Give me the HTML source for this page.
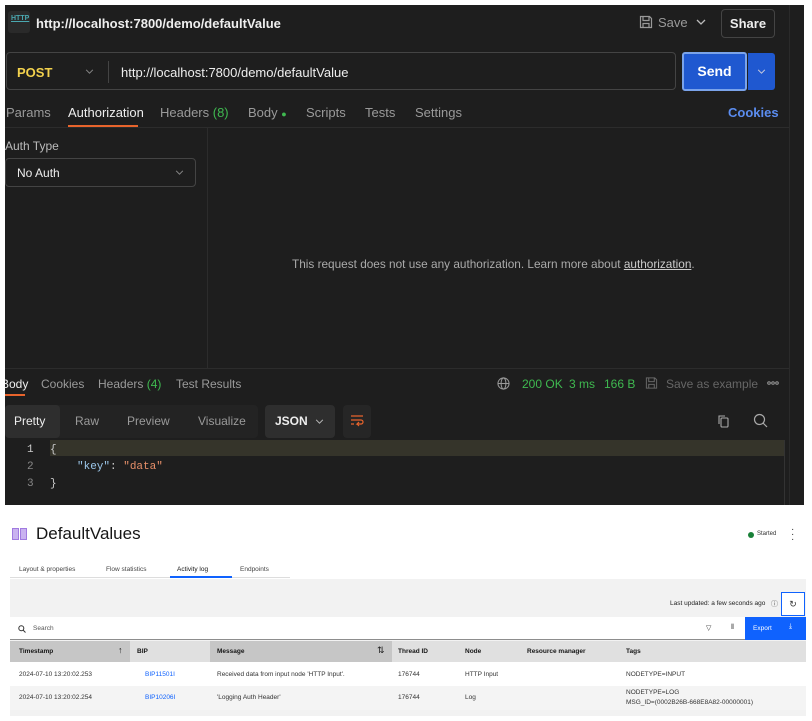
<!DOCTYPE html>
<html><head><meta charset="utf-8"><style>
*{margin:0;padding:0;box-sizing:border-box}
body{width:812px;height:721px;background:#fff;font-family:"Liberation Sans",sans-serif;position:relative;overflow:hidden}
.a{position:absolute;white-space:nowrap}
#dk{position:absolute;left:5px;top:5px;width:799px;height:500px;background:#1e1e1e;overflow:hidden}
.g{color:#9a9a9a}
.w{color:#eee}
</style></head><body>
<div id="dk">
 <div class="a" style="left:3px;top:6px;width:22px;height:22px;background:#2a2a2a;border-radius:3px"></div>
 <div class="a" style="left:6px;top:10px;font-size:7px;color:#4aa8b0;font-weight:bold;text-decoration:underline">HTTP</div>
 <div class="a w" style="left:31px;top:11px;font-size:13px;font-weight:bold">http://localhost:7800/demo/defaultValue</div>
 <svg class="a" style="left:634px;top:10px" width="14" height="14" viewBox="0 0 14 14" fill="none" stroke="#999" stroke-width="1.2"><path d="M1.5 1.5h9l2 2v9h-11z M4 1.5v4h6v-4 M4 12.5v-4h6v4"/></svg>
 <div class="a g" style="left:653px;top:10px;font-size:13px">Save</div>
 <svg class="a" style="left:691px;top:14px" width="10" height="6" viewBox="0 0 10 6" fill="none" stroke="#bbb" stroke-width="1.3"><path d="M1 1l4 4 4-4"/></svg>
 <div class="a" style="left:716px;top:4px;width:54px;height:29px;border:1px solid #444;border-radius:4px;color:#eee;font-size:13px;font-weight:bold;text-align:center;line-height:27px">Share</div>
 <div class="a" style="left:784px;top:0;width:1px;height:500px;background:#2a2a2a"></div>

 <div class="a" style="left:1px;top:47px;width:670px;height:38px;border:1px solid #444;border-radius:4px"></div>
 <div class="a" style="left:12px;top:60px;font-size:13px;font-weight:bold;color:#f2d14d">POST</div>
 <svg class="a" style="left:80px;top:64px" width="9" height="5" viewBox="0 0 10 6" fill="none" stroke="#888" stroke-width="1.2"><path d="M1 1l4 4 4-4"/></svg>
 <div class="a" style="left:103px;top:56px;width:1px;height:22px;background:#444"></div>
 <div class="a w" style="left:116px;top:60px;font-size:13px">http://localhost:7800/demo/defaultValue</div>
 <div class="a" style="left:677px;top:47px;width:65px;height:39px;background:#1f58d0;border:2px solid #7aa3ea;border-radius:3px;color:#fff;font-size:14px;font-weight:bold;text-align:center;line-height:35px">Send</div>
 <div class="a" style="left:743px;top:48px;width:27px;height:37px;background:#1f58d0;border-radius:0 3px 3px 0"></div>
 <svg class="a" style="left:752px;top:64px" width="9" height="5" viewBox="0 0 10 6" fill="none" stroke="#ccd" stroke-width="1.2"><path d="M1 1l4 4 4-4"/></svg>

 <div class="a g" style="left:1px;top:100px;font-size:13px">Params</div>
 <div class="a w" style="left:63px;top:100px;font-size:13px">Authorization</div>
 <div class="a" style="left:63px;top:120px;width:70px;height:2px;background:#e8642c"></div>
 <div class="a g" style="left:155px;top:100px;font-size:13px">Headers <span style="color:#3fb950">(8)</span></div>
 <div class="a g" style="left:243px;top:100px;font-size:13px">Body <span style="color:#3fb950;font-size:9px">●</span></div>
 <div class="a g" style="left:301px;top:100px;font-size:13px">Scripts</div>
 <div class="a g" style="left:360px;top:100px;font-size:13px">Tests</div>
 <div class="a g" style="left:410px;top:100px;font-size:13px">Settings</div>
 <div class="a" style="left:723px;top:100px;font-size:13px;font-weight:bold;color:#5b8df0">Cookies</div>
 <div class="a" style="left:0;top:122px;width:784px;height:1px;background:#2c2c2c"></div>
 <div class="a" style="left:202px;top:123px;width:1px;height:240px;background:#2c2c2c"></div>
 <div class="a" style="left:0;top:134px;font-size:12px;color:#bbb">Auth Type</div>
 <div class="a" style="left:0;top:153px;width:191px;height:29px;border:1px solid #444;border-radius:4px"></div>
 <div class="a w" style="left:12px;top:161px;font-size:12px">No Auth</div>
 <svg class="a" style="left:170px;top:165px" width="9" height="5" viewBox="0 0 10 6" fill="none" stroke="#888" stroke-width="1.2"><path d="M1 1l4 4 4-4"/></svg>
 <div class="a" style="left:287px;top:252px;font-size:11.8px;color:#aaa">This request does not use any authorization. Learn more about <span style="text-decoration:underline;color:#ccc">authorization</span>.</div>

 <div class="a" style="left:0;top:363px;width:784px;height:1px;background:#2c2c2c"></div>
 <div class="a w" style="left:-4px;top:372px;font-size:12px">Body</div>
 <div class="a" style="left:0;top:389px;width:20px;height:2px;background:#e8642c"></div>
 <div class="a g" style="left:36px;top:372px;font-size:12px">Cookies</div>
 <div class="a g" style="left:93px;top:372px;font-size:12px">Headers <span style="color:#3fb950">(4)</span></div>
 <div class="a g" style="left:171px;top:372px;font-size:12px">Test Results</div>
 <svg class="a" style="left:492px;top:372px" width="13" height="13" viewBox="0 0 14 14" fill="none" stroke="#999" stroke-width="1.1"><circle cx="7" cy="7" r="6"/><ellipse cx="7" cy="7" rx="2.6" ry="6"/><path d="M1 7h12"/></svg>
 <div class="a" style="left:517px;top:372px;font-size:12px;color:#3fb950">200 OK</div>
 <div class="a" style="left:564px;top:372px;font-size:12px;color:#3fb950">3 ms</div>
 <div class="a" style="left:599px;top:372px;font-size:12px;color:#3fb950">166 B</div>
 <svg class="a" style="left:640px;top:371px" width="13" height="14" viewBox="0 0 14 14" fill="none" stroke="#666" stroke-width="1.1"><path d="M1.5 1.5h9l2 2v9h-11z M4 1.5v4h6v-4 M4 12.5v-4h6v4"/></svg>
 <div class="a" style="left:661px;top:372px;font-size:12px;color:#666">Save as example</div>
 <svg class="a" style="left:762px;top:376px" width="12" height="4" viewBox="0 0 12 4" fill="none" stroke="#999"><circle cx="2" cy="2" r="1.3"/><circle cx="6" cy="2" r="1.3"/><circle cx="10" cy="2" r="1.3"/></svg>

 <div class="a" style="left:0;top:400px;width:253px;height:33px;background:#232323;border-radius:4px"></div>
 <div class="a" style="left:0;top:400px;width:55px;height:33px;background:#2e2e2e;border-radius:4px"></div>
 <div class="a w" style="left:9px;top:409px;font-size:12px">Pretty</div>
 <div class="a g" style="left:70px;top:409px;font-size:12px">Raw</div>
 <div class="a g" style="left:122px;top:409px;font-size:12px">Preview</div>
 <div class="a g" style="left:193px;top:409px;font-size:12px">Visualize</div>
 <div class="a" style="left:260px;top:400px;width:70px;height:33px;background:#2e2e2e;border-radius:4px"></div>
 <div class="a w" style="left:270px;top:409px;font-size:12px;font-weight:bold">JSON</div>
 <svg class="a" style="left:310px;top:414px" width="9" height="5" viewBox="0 0 10 6" fill="none" stroke="#bbb" stroke-width="1.2"><path d="M1 1l4 4 4-4"/></svg>
 <div class="a" style="left:338px;top:400px;width:28px;height:33px;background:#262626;border-radius:4px"></div>
 <svg class="a" style="left:345px;top:409px" width="14" height="14" viewBox="0 0 14 14" fill="none" stroke="#e8642c" stroke-width="1.2"><path d="M1 2h12M1 6h10a2 2 0 0 1 0 4H7l2-2M7 10l2 2M1 10h3"/></svg>
 <svg class="a" style="left:712px;top:409px" width="14" height="14" viewBox="0 0 14 14" fill="none" stroke="#aaa" stroke-width="1.1"><rect x="4" y="4" width="7" height="9" rx="1"/><path d="M2 10V2h6"/></svg>
 <svg class="a" style="left:748px;top:408px" width="15" height="15" viewBox="0 0 15 15" fill="none" stroke="#aaa" stroke-width="1.2"><circle cx="6.5" cy="6.5" r="5"/><path d="M10 10l4 4"/></svg>

 <div class="a" style="left:45px;top:435px;width:734px;height:16px;background:#35342a"></div>
 <div class="a" style="left:779px;top:435px;width:1px;height:65px;background:#333"></div>
 <div style="position:absolute;left:0;top:437px;font-family:'Liberation Mono',monospace;font-size:11px;line-height:16.5px">
  <div class="a" style="left:22px;top:0;color:#ccc">1</div><div class="a" style="left:45px;top:0;color:#ccc">{</div>
  <div class="a" style="left:22px;top:17px;color:#888">2</div><div class="a" style="left:72px;top:17px"><span style="color:#9cc7ea">"key"</span><span style="color:#ccc">: </span><span style="color:#e8906a">"data"</span></div>
  <div class="a" style="left:22px;top:34px;color:#888">3</div><div class="a" style="left:45px;top:34px;color:#ccc">}</div>
 </div>
</div>

<div class="a" style="left:12px;top:528px;width:7px;height:12px;background:#c9b2f0;border:1px solid #a07ae0"></div>
<div class="a" style="left:20px;top:528px;width:7px;height:12px;background:#c9b2f0;border:1px solid #a07ae0"></div>
<div class="a" style="left:36px;top:524px;font-size:17px;color:#161616">DefaultValues</div>
<div class="a" style="left:748px;top:532px;width:6px;height:6px;border-radius:50%;background:#198038"></div>
<div class="a" style="left:757px;top:531px;font-size:6px;color:#333">Started</div>
<div class="a" style="left:791px;top:527px;font-size:10px;color:#333;line-height:5px">·<br>·<br>·</div>
<div class="a" style="left:19px;top:566px;font-size:6.5px;color:#444">Layout &amp; properties</div>
<div class="a" style="left:106px;top:566px;font-size:6.5px;color:#444">Flow statistics</div>
<div class="a" style="left:177px;top:566px;font-size:6.5px;color:#161616">Activity log</div>
<div class="a" style="left:240px;top:566px;font-size:6.5px;color:#444">Endpoints</div>
<div class="a" style="left:10px;top:577px;width:280px;height:1px;background:#ddd"></div>
<div class="a" style="left:170px;top:576px;width:62px;height:2px;background:#0f62fe"></div>
<div class="a" style="left:10px;top:579px;width:796px;height:137px;background:#f2f2f2"></div>
<div class="a" style="left:670px;top:600px;font-size:6.5px;color:#222">Last updated: a few seconds ago</div>
<div class="a" style="left:771px;top:599px;font-size:7px;color:#555">ⓘ</div>
<div class="a" style="left:781px;top:592px;width:24px;height:24px;border:1px solid #0f62fe;background:#fff;font-size:9px;text-align:center;line-height:22px;color:#333">↻</div>
<div class="a" style="left:10px;top:617px;width:735px;height:23px;background:#fff;border-bottom:1px solid #8d8d8d"></div>
<svg class="a" style="left:18px;top:625px" width="8" height="8" viewBox="0 0 8 8" fill="none" stroke="#333"><circle cx="3.3" cy="3.3" r="2.5"/><path d="M5 5l2.5 2.5"/></svg>
<div class="a" style="left:33px;top:625px;font-size:6.5px;color:#555">Search</div>
<div class="a" style="left:706px;top:624px;font-size:7px;color:#333">▽</div>
<div class="a" style="left:731px;top:624px;font-size:7px;color:#333">⦀</div>
<div class="a" style="left:745px;top:617px;width:61px;height:23px;background:#0f62fe"></div>
<div class="a" style="left:753px;top:625px;font-size:6.5px;color:#fff">Export</div>
<div class="a" style="left:789px;top:623px;font-size:7px;color:#fff">⤓</div>
<div class="a" style="left:10px;top:641px;width:796px;height:21px;background:#e0e0e0"></div>
<div class="a" style="left:10px;top:641px;width:120px;height:21px;background:#c6c6c6"></div>
<div class="a" style="left:210px;top:641px;width:182px;height:21px;background:#c6c6c6"></div>
<div style="font-size:6.5px;font-weight:bold;color:#161616">
<div class="a" style="left:19px;top:648px">Timestamp</div><div class="a" style="left:118px;top:645px;font-size:9px;font-weight:normal">↑</div>
<div class="a" style="left:137px;top:648px">BIP</div>
<div class="a" style="left:217px;top:648px">Message</div><div class="a" style="left:377px;top:645px;font-size:9px;font-weight:normal">⇅</div>
<div class="a" style="left:398px;top:648px">Thread ID</div>
<div class="a" style="left:465px;top:648px">Node</div>
<div class="a" style="left:527px;top:648px">Resource manager</div>
<div class="a" style="left:626px;top:648px">Tags</div>
</div>
<div class="a" style="left:10px;top:662px;width:796px;height:24px;background:#fff"></div>
<div class="a" style="left:10px;top:686px;width:796px;height:24px;background:#f4f4f4"></div>
<div style="font-size:6.5px;color:#333">
<div class="a" style="left:19px;top:671px">2024-07-10 13:20:02.253</div>
<div class="a" style="left:145px;top:671px;color:#0f62fe">BIP11501I</div>
<div class="a" style="left:217px;top:671px">Received data from input node 'HTTP Input'.</div>
<div class="a" style="left:398px;top:671px">176744</div>
<div class="a" style="left:465px;top:671px">HTTP Input</div>
<div class="a" style="left:626px;top:671px">NODETYPE=INPUT</div>
<div class="a" style="left:19px;top:694px">2024-07-10 13:20:02.254</div>
<div class="a" style="left:145px;top:694px;color:#0f62fe">BIP10206I</div>
<div class="a" style="left:217px;top:694px">'Logging Auth Header'</div>
<div class="a" style="left:398px;top:694px">176744</div>
<div class="a" style="left:465px;top:694px">Log</div>
<div class="a" style="left:626px;top:689px">NODETYPE=LOG</div>
<div class="a" style="left:626px;top:699px">MSG_ID=(0002B26B-668E8A82-00000001)</div>
</div>
</body></html>
